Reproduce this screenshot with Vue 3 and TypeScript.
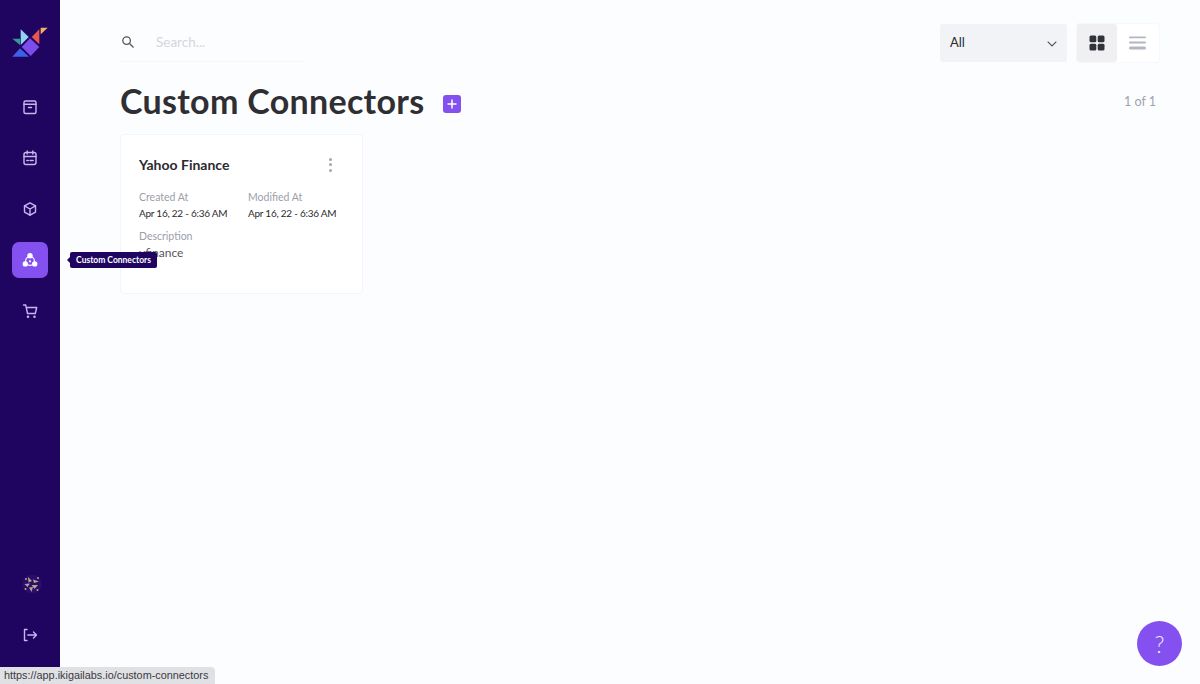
<script setup lang="ts">
const dates = [
  { label: "Created At", value: "Apr 16, 22 - 6:36 AM" },
  { label: "Modified At", value: "Apr 16, 22 - 6:36 AM" },
];
</script>

<template>
  <div class="page">
    <aside class="sidebar">
      <svg class="logo" viewBox="12 26 36 30" width="36" height="30">
        <polygon points="20.7,28.3 28.7,36 20.7,44" fill="#8fd3f0" />
        <polygon points="12.3,37.7 20,37.7 20,44" fill="#2f9c95" />
        <polygon points="39.3,28.3 39.3,43.3 31.7,36" fill="#e5584f" />
        <polygon points="40.7,26.7 47.7,26.7 40.7,33.3" fill="#f2b266" />
        <polygon points="30,37.3 39.3,46 30.7,55 21.7,46" fill="#7c4dea" />
        <polygon points="20,47.3 29,55.7 12.3,55.7" fill="#3f5fe8" />
      </svg>
      <nav class="nav">
        <a class="nav-item">
          <svg viewBox="0 0 18 18" width="18" height="18" class="ico">
            <rect x="3" y="3" width="12" height="12.500" rx="1.500" />
            <path d="M3 6.200h12M7.500 9.500h3" />
          </svg>
        </a>
        <a class="nav-item">
          <svg viewBox="0 0 18 18" width="18" height="18" class="ico">
            <rect x="3" y="3.500" width="12" height="12" rx="2" />
            <path d="M3 7.500h12M6.200 2v3M11.800 2v3M5.800 11.500h1.500M9 11.500h3.200" />
          </svg>
        </a>
        <a class="nav-item">
          <svg viewBox="0 0 18 18" width="18" height="18" class="ico">
            <path d="M9 2.800l5.500 3.100v6.200L9 15.200l-5.500-3.100V5.900z" />
            <path d="M3.500 5.900L9 9l5.500-3.100M9 9v6.200" />
          </svg>
        </a>
        <a class="nav-item active">
          <svg viewBox="0 0 18 18" width="18" height="18">
            <circle cx="9" cy="10" r="4.400" fill="none" stroke="#fff" stroke-width="1.100" />
            <circle cx="9" cy="4.800" r="2.700" fill="#fff" />
            <circle cx="4.300" cy="12.900" r="2.700" fill="#fff" />
            <circle cx="13.700" cy="12.900" r="2.700" fill="#fff" />
            <circle cx="9" cy="10.300" r="1.100" fill="#fff" />
          </svg>
          <span class="tooltip">Custom Connectors</span>
        </a>
        <a class="nav-item">
          <svg viewBox="0 0 18 18" width="18" height="18" class="ico">
            <path d="M2.500 3h2.200l1.800 8.500h7.800L15.700 5.500H5.200" />
            <circle cx="7" cy="14.800" r="0.600" />
            <circle cx="13.500" cy="14.800" r="0.600" />
          </svg>
        </a>
      </nav>
      <div class="nav nav-bottom">
        <a class="nav-item avatar-item">
          <svg viewBox="0 0 20 20" width="20" height="20">
            <circle cx="10" cy="10" r="9.600" fill="#2a0e6a" />
            <g fill="#b8a38f">
              <circle cx="4" cy="5" r="1" />
              <circle cx="16" cy="4" r="1" />
              <circle cx="3.500" cy="15" r="1" />
              <circle cx="15.500" cy="16" r="1" />
              <polygon points="6,3 10,7 6.500,8.500" />
              <polygon points="11,5.500 17,7.500 12,9" />
              <polygon points="2.500,10 8,9.500 5.500,13" />
              <polygon points="9.500,11 16,11 12.500,15" />
              <polygon points="7,13.500 11,13 9.500,18" />
            </g>
          </svg>
        </a>
        <a class="nav-item">
          <svg viewBox="0 0 18 18" width="18" height="18" class="ico">
            <path d="M6 3.500H3.500v11H6M6.800 9h8.700M12.500 6l3 3-3 3" />
          </svg>
        </a>
      </div>
    </aside>

    <main class="content">
      <header class="toolbar">
        <label class="search">
          <svg viewBox="0 0 14 14" width="14" height="14" class="search-ico">
            <circle cx="5.600" cy="5.600" r="3.800" />
            <path d="M8.500 8.500l4 4" />
          </svg>
          <span class="placeholder">Search...</span>
        </label>
        <div class="toolbar-right">
          <div class="select">
            <span class="select-value">All</span>
            <svg viewBox="0 0 10 6" width="10" height="6" class="chevron"><path d="M.7.7L5 5l4.300-4.300" /></svg>
          </div>
          <div class="view-toggle">
            <button class="toggle-btn selected">
              <svg viewBox="0 0 16 16" width="16" height="16">
                <rect x="0.500" y="0.500" width="6.800" height="6.800" rx="1.500" />
                <rect x="8.700" y="0.500" width="6.800" height="6.800" rx="1.500" />
                <rect x="0.500" y="8.700" width="6.800" height="6.800" rx="1.500" />
                <rect x="8.700" y="8.700" width="6.800" height="6.800" rx="1.500" />
              </svg>
            </button>
            <button class="toggle-btn">
              <svg viewBox="0 0 18 14" width="18" height="14">
                <rect y="0.500" width="17" height="1.800" rx="0.900" />
                <rect y="5.500" width="17" height="2" rx="1" />
                <rect y="10.500" width="17" height="3" rx="1.500" />
              </svg>
            </button>
          </div>
        </div>
      </header>

      <div class="title-row">
        <h1>Custom Connectors</h1>
        <button class="add-btn">
          <svg viewBox="0 0 18 18" width="18" height="18"><path d="M9 4.500v9M4.500 9h9" /></svg>
        </button>
        <span class="pager">1 of 1</span>
      </div>

      <section class="card">
        <div class="card-head">
          <h2>Yahoo Finance</h2>
          <span class="dots"><i></i><i></i><i></i></span>
        </div>
        <div class="meta">
          <div v-for="d in dates" :key="d.label">
            <div class="meta-label">{{ d.label }}</div>
            <div class="meta-value">{{ d.value }}</div>
          </div>
        </div>
        <div class="meta-label desc-label">Description</div>
        <div class="desc">yfinance</div>
      </section>
    </main>

    <button class="help">?</button>
    <div class="status">https://app.ikigailabs.io/custom-connectors</div>
  </div>
</template>

<style scoped>
.page {
  display: flex;
  min-height: 684px;
  height: 100vh;
  background: #fcfdff;
  font-family: "Lato", "Open Sans", sans-serif;
  color: #2f2f33;
  overflow: hidden;
}
.sidebar {
  width: 60px;
  flex: none;
  display: flex;
  flex-direction: column;
  align-items: center;
  background: #1f0560;
  padding: 27px 0 31px;
  box-sizing: border-box;
}
.logo {
  display: block;
  margin-bottom: 32px;
}
.nav {
  display: flex;
  flex-direction: column;
  gap: 15px;
}
.nav-bottom {
  margin-top: auto;
}
.nav-item {
  position: relative;
  width: 36px;
  height: 36px;
  border-radius: 7px;
  display: flex;
  align-items: center;
  justify-content: center;
}
.nav-item.active {
  background: #8550f0;
  z-index: 5;
}
.avatar-item svg {
  margin-left: 4px;
}
.ico {
  fill: none;
  stroke: #c9b5f0;
  stroke-width: 1.400;
  stroke-linecap: round;
  stroke-linejoin: round;
}
.tooltip {
  position: absolute;
  left: 58px;
  top: 10px;
  height: 16px;
  width: 87px;
  line-height: 16px;
  text-align: center;
  background: #1f0560;
  color: #fff;
  font-size: 8.500px;
  font-weight: 700;
  border-radius: 2px;
  white-space: nowrap;
}
.tooltip::before {
  content: "";
  position: absolute;
  left: -3px;
  top: 5px;
  border-style: solid;
  border-width: 3px 3px 3px 0;
  border-color: transparent #1f0560 transparent transparent;
}
.content {
  flex: 1;
  padding: 24px 41px 0 60px;
  min-width: 0;
}
.toolbar {
  display: flex;
  justify-content: space-between;
  height: 38px;
}
.search {
  width: 185px;
  display: flex;
  align-items: center;
  gap: 21px;
  padding-bottom: 2px;
  box-sizing: border-box;
  border-bottom: 1px solid #f5f6f9;
}
.search-ico {
  fill: none;
  stroke: #55555c;
  stroke-width: 1.300;
  margin-left: 1px;
}
.placeholder {
  font-size: 13.500px;
  color: #d5d6dc;
}
.toolbar-right {
  display: flex;
  gap: 10px;
}
.select {
  width: 127px;
  box-sizing: border-box;
  display: flex;
  align-items: center;
  justify-content: space-between;
  padding: 0 10px;
  background: #f2f3f7;
  border-radius: 3px;
  font-size: 13px;
  color: #2b2b2f;
}
.select-value {
  margin-bottom: 3px;
}
.chevron {
  fill: none;
  stroke: #55555c;
  stroke-width: 1.200;
  margin-top: 2px;
}
.view-toggle {
  display: flex;
  width: 82px;
  background: #fff;
  border-radius: 3px;
  box-shadow: 0 0 2px rgba(40, 40, 90, 0.1);
}
.toggle-btn {
  flex: 1;
  border: 0;
  padding: 0;
  background: none;
  display: flex;
  align-items: center;
  justify-content: center;
  fill: #b4b6c2;
  border-radius: 3px;
}
.toggle-btn.selected {
  flex: 0 0 40px;
  background: #f0f0f2;
  fill: #31323a;
}
.title-row {
  display: flex;
  align-items: center;
  margin-top: 18px;
  height: 42px;
}
h1 {
  margin: 0 0 2px;
  font-size: 34px;
  font-weight: 700;
  letter-spacing: 0.3px;
  color: #2f2f33;
}
.add-btn {
  width: 18px;
  height: 18px;
  margin: 6px 0 0 19px;
  padding: 0;
  border: 0;
  border-radius: 3px;
  background: #8550f0;
}
.add-btn svg {
  display: block;
  fill: none;
  stroke: #fff;
  stroke-width: 1.500;
}
.pager {
  margin: 1px 3px 0 auto;
  font-size: 12.500px;
  color: #a0a2ac;
}
.card {
  width: 243px;
  height: 160px;
  box-sizing: border-box;
  margin-top: 12px;
  padding: 20px 18px 0;
  background: #fff;
  border: 1px solid #f4f5f8;
  border-radius: 4px;
}
.card-head {
  display: flex;
  align-items: center;
  justify-content: space-between;
  padding-right: 12px;
  height: 18px;
}
h2 {
  margin: 0;
  font-size: 14px;
  font-weight: 700;
  color: #2b2b2f;
}
.dots {
  display: flex;
  flex-direction: column;
  gap: 2.500px;
  margin-top: 1px;
}
.dots i {
  width: 3px;
  height: 3px;
  border-radius: 50%;
  background: #a4a5ad;
}
.meta {
  display: grid;
  grid-template-columns: 109px 1fr;
  margin-top: 17px;
}
.meta-label {
  font-size: 10.500px;
  color: #9c9eaa;
  line-height: 14px;
}
.meta-value {
  font-size: 10px;
  letter-spacing: -0.250px;
  white-space: nowrap;
  color: #2b2b2f;
  line-height: 14px;
  margin-top: 2px;
}
.desc-label {
  margin-top: 9px;
}
.desc {
  font-size: 12px;
  color: #55555c;
  line-height: 16px;
  margin-top: 2px;
}
.help {
  position: fixed;
  right: 18px;
  bottom: 18px;
  width: 45px;
  height: 45px;
  border: 0;
  border-radius: 50%;
  background: #8550f0;
  color: #f3eafc;
  font-family: "Lato", sans-serif;
  font-size: 23px;
  font-weight: 300;
  padding: 0;
}
.status {
  position: fixed;
  left: 0;
  bottom: 0;
  height: 17px;
  width: 215px;
  box-sizing: border-box;
  padding-left: 4px;
  line-height: 17px;
  background: #e0e1e5;
  border-top-right-radius: 4px;
  color: #3a3a3e;
  font-family: "Liberation Sans", sans-serif;
  font-size: 10.850px;
  white-space: nowrap;
}
</style>
